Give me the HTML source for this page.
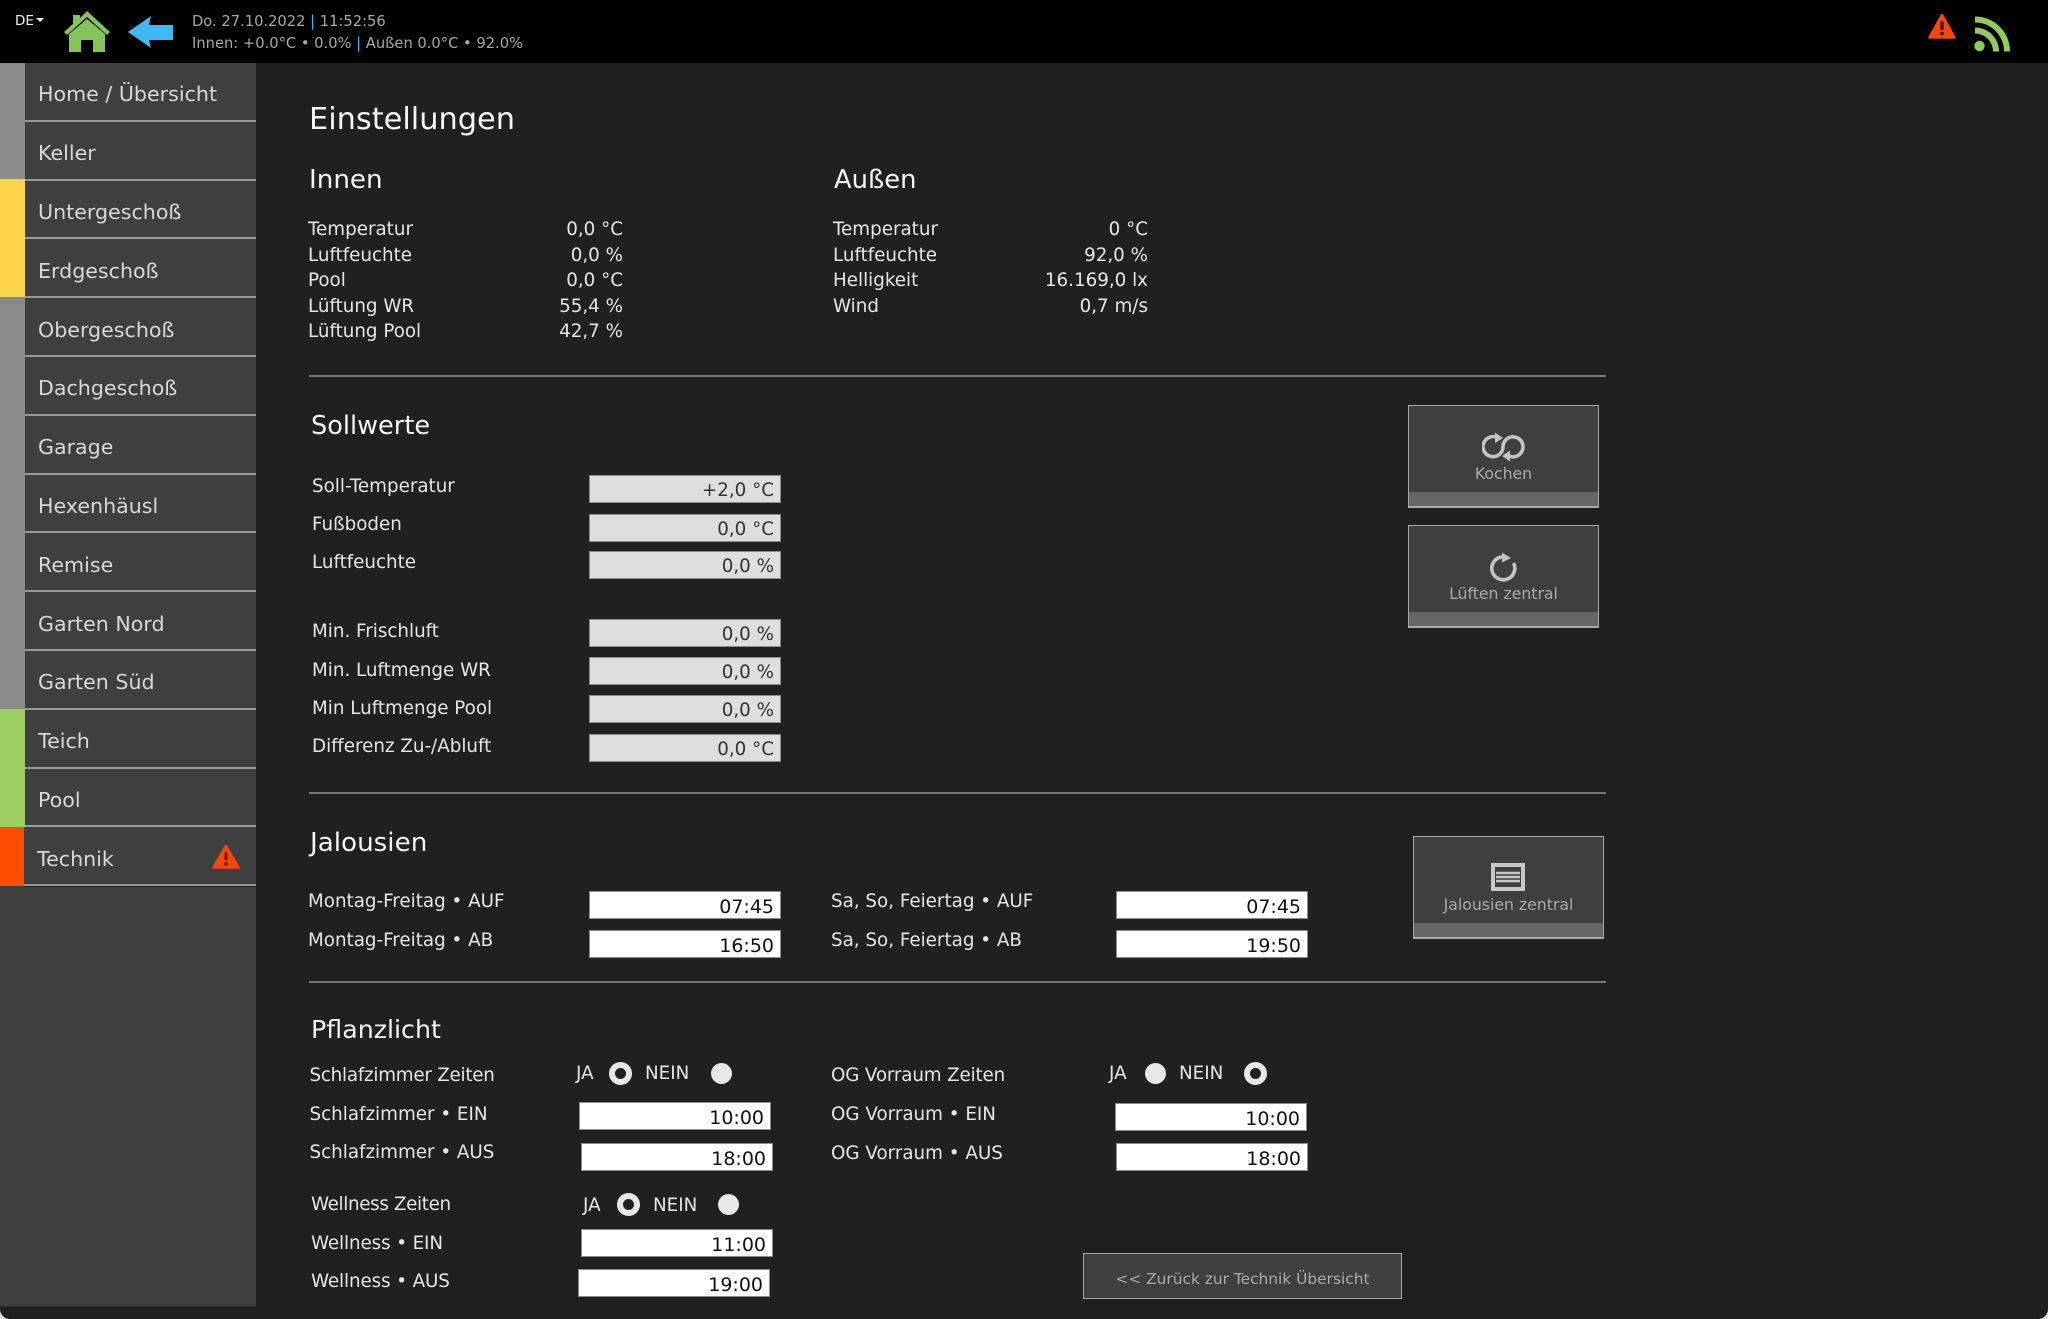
<!DOCTYPE html>
<html lang="de"><head><meta charset="utf-8"><title>Einstellungen</title>
<style>
html,body{margin:0;padding:0;width:2048px;height:1319px;overflow:hidden;background:#ddd}
#w{position:relative;width:2048px;height:1319px;background:#202020;overflow:hidden;border-radius:0 0 10px 10px;font-family:"DejaVu Sans","Liberation Sans",sans-serif;color:#e6e6e6}
#w div{position:absolute;box-sizing:border-box}
.t{line-height:30px;height:30px;white-space:nowrap;font-size:18.3px;margin-top:1px}
.r{text-align:right;width:200px}
.h2{font-size:26.2px;line-height:40px;height:40px;white-space:nowrap;color:#f4f4f4;margin-top:1px}
.m{left:25px;width:231px;height:58.8px;background:#3f3f3f;border-bottom:2px solid #999;box-shadow:0 1px 0 #222}
.mt{left:38px;font-size:20.6px;line-height:30px;height:30px;white-space:nowrap;color:#d8d8d8}
.i{width:192px;height:28px;border:1.5px solid #8c8c8c;text-align:right;padding-right:6px;font-size:18.3px;line-height:28px;padding-top:1px;background:#dedede;color:#333;white-space:nowrap}
.w{background:#fff;color:#111;font-size:19px}
.hr{left:309px;width:1297px;height:2px;background:#777}
.ring{width:23px;height:23px;border-radius:50%;border:6px solid #e8e8e8}
.dot{width:21px;height:21px;border-radius:50%;background:#e8e8e8}
.b{width:191px;height:103px;background:#3f3f3f;border:1.5px solid #a8a8a8;border-bottom-width:2.5px}
.bb{left:0;right:0;bottom:0;height:14px;background:#666}
.bt{left:0;right:0;text-align:center;font-size:15.7px;line-height:20px;color:#aaa;white-space:nowrap;margin-top:1px}
.hd{font-size:14.7px;line-height:20px;color:#a8a8a8;white-space:nowrap;left:192px;margin-top:1px}
.hd span{color:#3ab4f0}
</style></head><body><div id="w">
<!-- header -->
<div style="left:0;top:0;width:2048px;height:63px;background:#000"></div>
<div style="left:15px;top:11px;font-size:13.5px;line-height:20px;color:#f0f0f0">DE</div>
<div style="left:36px;top:18px;width:0;height:0;border-left:4px solid transparent;border-right:4px solid transparent;border-top:4px solid #eee"></div>
<svg style="position:absolute;left:64px;top:10px" width="46" height="43" viewBox="0 0 46 43"><path d="M5 24 L23 9 L41 24 V42 H29 V30 H17 V42 H5Z" fill="#86c35c"/><path d="M0 22 L9 14 V5 H16 V8 L23 1 L46 22 L43 25 L23 7 L3 25Z" fill="#86c35c"/></svg>
<svg style="position:absolute;left:128px;top:15px" width="46" height="34" viewBox="0 0 46 34"><path d="M0 17 L23 1 L21 10 H45 V25 H21 L23 33Z" fill="#3fb8f5"/></svg>
<div class="hd" style="top:11px">Do. 27.10.2022 <span>|</span> 11:52:56</div>
<div class="hd" style="top:33px">Innen: +0.0°C • 0.0% <span>|</span> Außen 0.0°C • 92.0%</div>
<svg style="position:absolute;left:1928px;top:13px" width="28" height="27" viewBox="0 0 28 27"><path d="M14 2 L26.5 24.5 H1.5Z" fill="#f4470c" stroke="#f4470c" stroke-width="2.5" stroke-linejoin="round"/><rect x="12.4" y="8" width="3.2" height="9" rx="1.4" fill="#3a1205"/><circle cx="14" cy="20.5" r="1.8" fill="#3a1205"/></svg>
<svg style="position:absolute;left:1973px;top:15px" width="38" height="38" viewBox="0 0 38 38"><circle cx="6.5" cy="31" r="5.2" fill="#8fcb5e"/><path d="M2 15.5 A21 21 0 0 1 23 36.5" fill="none" stroke="#8fcb5e" stroke-width="6"/><path d="M2 4.5 A32 32 0 0 1 34 36.5" fill="none" stroke="#8fcb5e" stroke-width="6"/></svg>
<!-- sidebar -->
<div style="left:0;top:63px;width:256px;height:1243px;background:#3f3f3f"></div>
<div style="left:0;top:1306px;width:256px;height:1px;background:#2a2a2a"></div>
<div style="left:0;top:63px;width:25px;height:116px;background:#8a8a8a"></div>
<div style="left:0;top:179px;width:25px;height:118px;background:#ffd44d"></div>
<div style="left:0;top:297px;width:25px;height:412px;background:#8a8a8a"></div>
<div style="left:0;top:709px;width:25px;height:118px;background:#9bcf63"></div>
<div style="left:0;top:827px;width:24px;height:59px;background:#ff4d00"></div>
<div class="m" style="top:63px"></div><div class="mt" style="top:79px;left:38px">Home / Übersicht</div>
<div class="m" style="top:121.8px"></div><div class="mt" style="top:138px">Keller</div>
<div class="m" style="top:180.6px"></div><div class="mt" style="top:197px">Untergeschoß</div>
<div class="m" style="top:239.4px"></div><div class="mt" style="top:256px">Erdgeschoß</div>
<div class="m" style="top:298.2px"></div><div class="mt" style="top:315px">Obergeschoß</div>
<div class="m" style="top:357px"></div><div class="mt" style="top:373px">Dachgeschoß</div>
<div class="m" style="top:415.8px"></div><div class="mt" style="top:432px">Garage</div>
<div class="m" style="top:474.6px"></div><div class="mt" style="top:491px">Hexenhäusl</div>
<div class="m" style="top:533.4px"></div><div class="mt" style="top:550px">Remise</div>
<div class="m" style="top:592.2px"></div><div class="mt" style="top:609px">Garten Nord</div>
<div class="m" style="top:651px"></div><div class="mt" style="top:667px">Garten Süd</div>
<div class="m" style="top:709.8px"></div><div class="mt" style="top:726px">Teich</div>
<div class="m" style="top:768.6px"></div><div class="mt" style="top:785px">Pool</div>
<div class="m" style="top:827.4px;left:24px;width:232px"></div><div class="mt" style="top:844px;left:37px">Technik</div>
<svg style="position:absolute;left:212px;top:844px" width="28" height="26" viewBox="0 0 28 26"><path d="M14 2 L26.5 23.5 H1.5Z" fill="#f4470c" stroke="#f4470c" stroke-width="2.5" stroke-linejoin="round"/><rect x="12.6" y="8" width="2.8" height="8.5" rx="1.2" fill="#5a2010"/><circle cx="14" cy="20" r="1.7" fill="#5a2010"/></svg>
<!-- headings -->
<div style="left:309px;top:98px;font-size:30.4px;line-height:44px;color:#f6f6f6;white-space:nowrap">Einstellungen</div>
<div class="h2" style="left:309px;top:159px">Innen</div>
<div class="h2" style="left:834px;top:159px;font-size:25.8px">Außen</div>
<!-- innen -->
<div class="t" style="left:308px;top:214px">Temperatur</div><div class="t r" style="left:423px;top:214px">0,0 °C</div>
<div class="t" style="left:308px;top:240px">Luftfeuchte</div><div class="t r" style="left:423px;top:240px">0,0 %</div>
<div class="t" style="left:308px;top:265px">Pool</div><div class="t r" style="left:423px;top:265px">0,0 °C</div>
<div class="t" style="left:308px;top:291px">Lüftung WR</div><div class="t r" style="left:423px;top:291px">55,4 %</div>
<div class="t" style="left:308px;top:316px">Lüftung Pool</div><div class="t r" style="left:423px;top:316px">42,7 %</div>
<!-- aussen -->
<div class="t" style="left:833px;top:214px">Temperatur</div><div class="t r" style="left:948px;top:214px">0 °C</div>
<div class="t" style="left:833px;top:240px">Luftfeuchte</div><div class="t r" style="left:948px;top:240px">92,0 %</div>
<div class="t" style="left:833px;top:265px">Helligkeit</div><div class="t r" style="left:948px;top:265px">16.169,0 lx</div>
<div class="t" style="left:833px;top:291px">Wind</div><div class="t r" style="left:948px;top:291px">0,7 m/s</div>
<div class="hr" style="top:375px"></div>
<!-- sollwerte -->
<div class="h2" style="left:311px;top:405px;font-size:25.6px">Sollwerte</div>
<div class="t" style="left:312px;top:471px">Soll-Temperatur</div><div class="i" style="left:589px;top:475px">+2,0 °C</div>
<div class="t" style="left:312px;top:509px">Fußboden</div><div class="i" style="left:589px;top:514px">0,0 °C</div>
<div class="t" style="left:312px;top:547px">Luftfeuchte</div><div class="i" style="left:589px;top:551px">0,0 %</div>
<div class="t" style="left:312px;top:616px">Min. Frischluft</div><div class="i" style="left:589px;top:619px">0,0 %</div>
<div class="t" style="left:312px;top:655px">Min. Luftmenge WR</div><div class="i" style="left:589px;top:657px">0,0 %</div>
<div class="t" style="left:312px;top:693px">Min Luftmenge Pool</div><div class="i" style="left:589px;top:695px">0,0 %</div>
<div class="t" style="left:312px;top:731px">Differenz Zu-/Abluft</div><div class="i" style="left:589px;top:734px">0,0 °C</div>
<!-- buttons -->
<div class="b" style="left:1408px;top:405px"><div class="bb"></div><div class="bt" style="top:57px">Kochen</div></div>
<svg style="position:absolute;left:1482px;top:432px" width="44" height="30" viewBox="0 0 44 30" fill="none" stroke="#c4c4c4" stroke-width="3.6"><path d="M15 5.5 A10 10 0 1 0 21 15 A10 10 0 1 1 27 24"/><path d="M13 .5 L21 6 L13 11Z" fill="#c4c4c4" stroke="none"/><path d="M28 18.5 L20 24 L28 29.5Z" fill="#c4c4c4" stroke="none"/></svg>
<div class="b" style="left:1408px;top:525px"><div class="bb"></div><div class="bt" style="top:57px">Lüften zentral</div></div>
<svg style="position:absolute;left:1488px;top:550px" width="30" height="32" viewBox="0 0 30 32" fill="none" stroke="#c4c4c4" stroke-width="3.6"><path d="M15 6.8 A11.5 11.5 0 1 0 25.5 13"/><path d="M14 2.5 L23 8 L14 12.5Z" fill="#c4c4c4" stroke="none"/></svg>
<div class="hr" style="top:792px"></div>
<!-- jalousien -->
<div class="h2" style="left:310px;top:822px;font-size:26.2px">Jalousien</div>
<div class="t" style="left:308px;top:886px">Montag-Freitag • AUF</div><div class="i w" style="left:589px;top:891px">07:45</div>
<div class="t" style="left:308px;top:925px">Montag-Freitag • AB</div><div class="i w" style="left:589px;top:930px">16:50</div>
<div class="t" style="left:831px;top:886px">Sa, So, Feiertag • AUF</div><div class="i w" style="left:1116px;top:891px">07:45</div>
<div class="t" style="left:831px;top:925px">Sa, So, Feiertag • AB</div><div class="i w" style="left:1116px;top:930px">19:50</div>
<div class="b" style="left:1413px;top:836px"><div class="bb"></div><div class="bt" style="top:57px">Jalousien zentral</div></div>
<svg style="position:absolute;left:1491px;top:863px" width="34" height="28" viewBox="0 0 34 28"><rect x="2" y="2" width="30" height="24" fill="#3f3f3f" stroke="#c8c8c8" stroke-width="4"/><path d="M5 10 H29 M5 14 H29 M5 18 H29" stroke="#c8c8c8" stroke-width="2.4"/></svg>
<div class="hr" style="top:981px"></div>
<!-- pflanzlicht -->
<div class="h2" style="left:311px;top:1009px;font-size:25.3px">Pflanzlicht</div>
<div class="t" style="left:309.5px;top:1060px;letter-spacing:-.24px">Schlafzimmer Zeiten</div>
<div class="t" style="left:576px;top:1058px">JA</div><div class="ring" style="left:608.5px;top:1061.5px"></div>
<div class="t" style="left:645px;top:1058px">NEIN</div><div class="dot" style="left:710.5px;top:1062.5px"></div>
<div class="t" style="left:309.5px;top:1099px">Schlafzimmer • EIN</div><div class="i w" style="left:579px;top:1102px">10:00</div>
<div class="t" style="left:309.5px;top:1137px">Schlafzimmer • AUS</div><div class="i w" style="left:581px;top:1143px">18:00</div>
<div class="t" style="left:311px;top:1189px;letter-spacing:-.35px">Wellness Zeiten</div>
<div class="t" style="left:583px;top:1190px">JA</div><div class="ring" style="left:616.5px;top:1193px"></div>
<div class="t" style="left:653px;top:1190px">NEIN</div><div class="dot" style="left:718px;top:1194px"></div>
<div class="t" style="left:311px;top:1228px;letter-spacing:-.1px">Wellness • EIN</div><div class="i w" style="left:581px;top:1229px">11:00</div>
<div class="t" style="left:311px;top:1266px;letter-spacing:-.1px">Wellness • AUS</div><div class="i w" style="left:578px;top:1269px">19:00</div>
<div class="t" style="left:831px;top:1060px;letter-spacing:-.15px">OG Vorraum Zeiten</div>
<div class="t" style="left:1109px;top:1058px">JA</div><div class="dot" style="left:1144.5px;top:1062.5px"></div>
<div class="t" style="left:1179px;top:1058px">NEIN</div><div class="ring" style="left:1243.5px;top:1061.5px"></div>
<div class="t" style="left:831px;top:1099px">OG Vorraum • EIN</div><div class="i w" style="left:1115px;top:1103px">10:00</div>
<div class="t" style="left:831px;top:1138px">OG Vorraum • AUS</div><div class="i w" style="left:1116px;top:1143px">18:00</div>
<div style="left:1083px;top:1253px;width:319px;height:46px;background:#3f3f3f;border:1.5px solid #a8a8a8"></div>
<div class="bt" style="left:1083px;right:auto;width:319px;top:1268px;font-size:15.4px">&lt;&lt; Zurück zur Technik Übersicht</div>
</div></body></html>
